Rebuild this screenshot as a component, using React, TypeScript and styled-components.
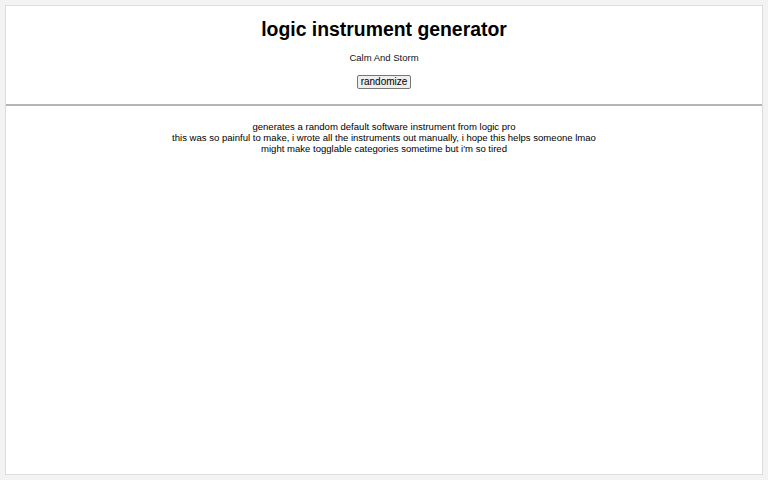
import React from "react"
import styled, { createGlobalStyle } from "styled-components"

const GlobalStyle = createGlobalStyle`
  html, body {
    margin: 0;
    padding: 0;
    background: #f3f3f3;
    font-family: "Liberation Sans", Arial, sans-serif;
  }
`

const Page = styled.div`
  padding: 5px;
  height: 480px;
  box-sizing: border-box;
`

const Card = styled.div`
  height: 470px;
  box-sizing: border-box;
  background: #fff;
  border: 1px solid #dcdcdc;
  display: flex;
  flex-direction: column;
`

const Header = styled.header`
  display: flex;
  flex-direction: column;
  align-items: center;
  padding-top: 12px;
  padding-bottom: 15px;
  border-bottom: 2px solid #b4b4b4;
`

const Title = styled.h1`
  margin: 0;
  font-size: 19.4px;
  line-height: 23px;
  font-weight: bold;
  color: #000;
`

const Subtitle = styled.p`
  margin: 11px 0 0;
  font-size: 9.5px;
  line-height: 12px;
  color: #111;
`

const Button = styled.button`
  margin-top: 11px;
  font-family: "Liberation Sans", Arial, sans-serif;
  font-size: 10px;
  line-height: 12px;
  padding: 0 3px;
  color: #000;
  background: #efefef;
  border: 1px solid #767676;
  border-radius: 2px;
`

const Description = styled.div`
  padding-top: 15px;
  text-align: center;
  font-size: 9.55px;
  line-height: 11px;
  color: #000;
`

export default function App() {
  return (
    <>
      <GlobalStyle />
      <Page>
        <Card>
          <Header>
            <Title>logic instrument generator</Title>
            <Subtitle>Calm And Storm</Subtitle>
            <Button>randomize</Button>
          </Header>
          <Description>
            generates a random default software instrument from logic pro
            <br />
            this was so painful to make, i wrote all the instruments out manually, i hope this helps someone lmao
            <br />
            might make togglable categories sometime but i'm so tired
          </Description>
        </Card>
      </Page>
    </>
  )
}
